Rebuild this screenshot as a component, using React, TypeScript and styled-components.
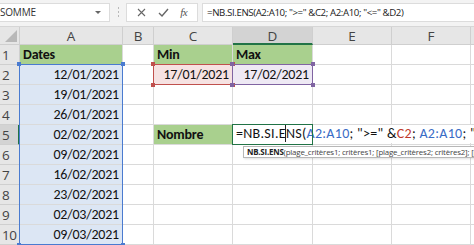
import React from 'react';
import styled, { createGlobalStyle } from 'styled-components';

const GlobalStyle = createGlobalStyle`
  html, body {
    margin: 0;
    padding: 0;
    background: #ffffff;
    overflow: hidden;
  }
  body {
    font-family: 'Open Sans', 'Liberation Sans', sans-serif;
  }
`;

const COLS = [20, 103, 31, 79, 80, 79, 79];
const ROW_H = 20;
const HEAD_H = 18;

const Sheet = styled.div`
  width: 474px;
  height: 245px;
  overflow: hidden;
  display: flex;
  flex-direction: column;
  background: #ffffff;
`;

const FormulaBar = styled.div`
  height: 27px;
  flex: 0 0 27px;
  display: flex;
  align-items: center;
  gap: 4px;
  background: #f3f3f3;
  border-bottom: 1px solid #d6d6d6;
  box-sizing: border-box;
  padding-bottom: 2px;
`;

const NameBox = styled.div`
  width: 110px;
  height: 19px;
  box-sizing: border-box;
  background: #ffffff;
  border: 1px solid #dcdcdc;
  border-left: none;
  display: flex;
  align-items: center;
  justify-content: space-between;
  padding: 0 8px 0 0;
  font-size: 10px;
  color: #333;
  letter-spacing: -0.2px;
`;

const DropArrow = styled.span`
  width: 0;
  height: 0;
  border-left: 3px solid transparent;
  border-right: 3px solid transparent;
  border-top: 3px solid #666;
`;

const Grip = styled.div`
  width: 8px;
  display: flex;
  flex-direction: column;
  align-items: center;
  gap: 2px;

  span {
    width: 1px;
    height: 2px;
    background: #b9b9b9;
  }
`;

const IconBox = styled.div`
  width: 72px;
  height: 19px;
  box-sizing: border-box;
  background: #ffffff;
  border: 1px solid #dcdcdc;
  display: flex;
  align-items: center;
  justify-content: space-around;
  padding: 0 4px;
`;

const FxGlyph = styled.span`
  font-family: 'Liberation Serif', serif;
  font-style: italic;
  font-size: 11px;
  color: #555;
  letter-spacing: -0.5px;
`;

const FormulaInput = styled.div`
  flex: 1;
  height: 19px;
  box-sizing: border-box;
  background: #ffffff;
  border: 1px solid #dcdcdc;
  border-right: none;
  display: flex;
  align-items: center;
  padding-left: 4px;
  font-size: 9.7px;
  color: #222;
  white-space: nowrap;
  overflow: hidden;
  letter-spacing: -0.4px;
`;

const Grid = styled.div`
  position: relative;
  display: grid;
  grid-template-columns: ${COLS.map((c) => `${c}px`).join(' ')} 1fr;
  grid-template-rows: ${HEAD_H}px repeat(10, ${ROW_H}px);
  font-family: 'Carlito', 'Open Sans', 'Liberation Sans', sans-serif;
`;

const Corner = styled.div`
  background: #e6e6e6;
  border-right: 1px solid #cfcfcf;
  border-bottom: 1px solid #cfcfcf;
  box-sizing: border-box;
  position: relative;

  &::after {
    content: '';
    position: absolute;
    right: 2px;
    bottom: 2px;
    width: 0;
    height: 0;
    border-left: 12px solid transparent;
    border-bottom: 12px solid #b8b8b8;
  }
`;

const ColHead = styled.div<{ $active?: boolean }>`
  background: ${(p) => (p.$active ? '#d3d3d3' : '#e6e6e6')};
  border-right: 1px solid #cfcfcf;
  border-bottom: ${(p) => (p.$active ? '2px solid #217346' : '1px solid #cfcfcf')};
  box-sizing: border-box;
  display: flex;
  align-items: center;
  justify-content: center;
  font-family: 'Open Sans', 'Liberation Sans', sans-serif;
  font-size: 13.5px;
  color: #444;
  padding-top: 1px;
`;

const RowHead = styled.div<{ $active?: boolean }>`
  background: ${(p) => (p.$active ? '#d3d3d3' : '#e6e6e6')};
  border-right: ${(p) => (p.$active ? '2px solid #217346' : '1px solid #cfcfcf')};
  border-bottom: 1px solid #cfcfcf;
  box-sizing: border-box;
  display: flex;
  align-items: center;
  padding-left: 2px;
  font-family: 'Open Sans', 'Liberation Sans', sans-serif;
  font-size: 13.5px;
  color: #444;
  letter-spacing: -0.5px;
`;

const Cell = styled.div<{ $fill?: string; $bold?: boolean; $right?: boolean }>`
  background: ${(p) => p.$fill || 'transparent'};
  border-right: 1px solid #dadada;
  border-bottom: 1px solid #dadada;
  box-sizing: border-box;
  display: flex;
  align-items: center;
  justify-content: ${(p) => (p.$right ? 'flex-end' : 'flex-start')};
  padding: 0 3px;
  font-size: 14px;
  font-weight: ${(p) => (p.$bold ? 700 : 400)};
  color: #111;
  white-space: nowrap;
  letter-spacing: -0.2px;
`;

const EditCell = styled(Cell)`
  position: relative;
  overflow: visible;
  z-index: 3;
  padding: 0;
  align-items: flex-start;
`;

const EditText = styled.span`
  display: block;
  background: #ffffff;
  padding: 0 0 0 3px;
  height: 18px;
  line-height: 18px;
  white-space: pre;
  letter-spacing: 0.3px;
`;

const Ref = styled.span<{ $color: string }>`
  color: ${(p) => p.$color};
`;

const Caret = styled.span`
  display: inline-block;
  width: 1px;
  height: 17px;
  vertical-align: -4px;
  background: #222;
  margin: 0 -0.5px;
`;

const RefBox = styled.div<{ $color: string }>`
  position: absolute;
  box-sizing: border-box;
  border: 1px solid ${(p) => p.$color};
  pointer-events: none;
  z-index: 4;
`;

const Handle = styled.span<{ $color: string }>`
  position: absolute;
  width: 4px;
  height: 4px;
  background: ${(p) => p.$color};
`;

const EditBox = styled.div`
  position: absolute;
  box-sizing: border-box;
  border: 1.5px solid #217346;
  z-index: 5;
  pointer-events: none;
`;

const Tooltip = styled.div`
  position: absolute;
  z-index: 6;
  height: 12px;
  box-sizing: border-box;
  background: #ffffff;
  border: 1px solid #b7b7b7;
  box-shadow: 1px 1px 2px rgba(0, 0, 0, 0.12);
  display: flex;
  align-items: center;
  padding: 0 3px;
  font-family: 'Open Sans', 'Liberation Sans', sans-serif;
  font-size: 7.9px;
  color: #444;
  white-space: nowrap;
  letter-spacing: -0.2px;

  b {
    color: #222;
    font-weight: 700;
  }
`;

const GREEN = '#a9d08e';
const BLUE_FILL = '#dce6f4';
const BLUE = '#4a7bd0';
const RED = '#c0504d';
const PURPLE = '#8064a2';

const colLeft = (i: number) => COLS.slice(0, i).reduce((a, b) => a + b, 0);
const rowTop = (r: number) => HEAD_H + (r - 1) * ROW_H;

type Box = { col: number; row: number; rows: number; color: string };

function RefFrame({ col, row, rows, color }: Box) {
  const s = { left: colLeft(col) - 1, top: rowTop(row) - 1, width: COLS[col] + 1, height: rows * ROW_H + 1 };
  return (
    <RefBox $color={color} style={s}>
      <Handle $color={color} style={{ left: -3, top: -3 }} />
      <Handle $color={color} style={{ right: -3, top: -3 }} />
      <Handle $color={color} style={{ left: -3, bottom: -3 }} />
      <Handle $color={color} style={{ right: -3, bottom: -3 }} />
    </RefBox>
  );
}

const dates = [
  '12/01/2021',
  '19/01/2021',
  '26/01/2021',
  '02/02/2021',
  '09/02/2021',
  '16/02/2021',
  '23/02/2021',
  '02/03/2021',
  '09/03/2021',
];

export default function App() {
  const letters = ['A', 'B', 'C', 'D', 'E', 'F', ''];

  const cellFor = (row: number, col: number) => {
    // col: 1=A ... 7=G
    if (row === 1) {
      if (col === 1) return <Cell key={col} $fill={GREEN} $bold>Dates</Cell>;
      if (col === 3) return <Cell key={col} $fill={GREEN} $bold>Min</Cell>;
      if (col === 4) return <Cell key={col} $fill={GREEN} $bold>Max</Cell>;
    }
    if (col === 1 && row >= 2) {
      return <Cell key={col} $fill={BLUE_FILL} $right>{dates[row - 2]}</Cell>;
    }
    if (row === 2 && col === 3) return <Cell key={col} $fill="#f6e2e2" $right>17/01/2021</Cell>;
    if (row === 2 && col === 4) return <Cell key={col} $fill="#eee9f4" $right>17/02/2021</Cell>;
    if (row === 5 && col === 3) return <Cell key={col} $fill={GREEN} $bold>Nombre</Cell>;
    if (row === 5 && col === 4) {
      return (
        <EditCell key={col}>
          <EditText>
            {'=NB.SI.E'}
            <Caret />
            {'NS('}
            <Ref $color="#3a6cc6">A2:A10</Ref>
            {'; ">=" &'}
            <Ref $color="#c0392b">C2</Ref>
            {'; '}
            <Ref $color="#3a6cc6">A2:A10</Ref>
            {'; "<=" &D2)'}
          </EditText>
        </EditCell>
      );
    }
    return <Cell key={col} />;
  };

  return (
    <>
      <GlobalStyle />
      <Sheet>
        <FormulaBar>
          <NameBox>
            <span>SOMME</span>
            <DropArrow />
          </NameBox>
          <Grip>
            <span />
            <span />
            <span />
          </Grip>
          <IconBox>
            <svg width="9" height="9" viewBox="0 0 9 9">
              <path d="M1 1 L8 8 M8 1 L1 8" stroke="#666" strokeWidth="1.1" fill="none" />
            </svg>
            <svg width="11" height="9" viewBox="0 0 11 9">
              <path d="M1 5 L4 8 L10 1" stroke="#666" strokeWidth="1.4" fill="none" />
            </svg>
            <FxGlyph>fx</FxGlyph>
          </IconBox>
          <FormulaInput>=NB.SI.ENS(A2:A10; "&gt;=" &amp;C2; A2:A10; "&lt;=" &amp;D2)</FormulaInput>
        </FormulaBar>

        <Grid>
          <Corner />
          {letters.map((l, i) => (
            <ColHead key={i} $active={l === 'D'}>{l}</ColHead>
          ))}
          {Array.from({ length: 10 }, (_, r) => {
            const row = r + 1;
            return (
              <React.Fragment key={row}>
                <RowHead $active={row === 5}>{row}</RowHead>
                {[1, 2, 3, 4, 5, 6, 7].map((c) => cellFor(row, c))}
              </React.Fragment>
            );
          })}

          <RefFrame col={1} row={2} rows={9} color={BLUE} />
          <RefFrame col={3} row={2} rows={1} color={RED} />
          <RefFrame col={4} row={2} rows={1} color={PURPLE} />
          <EditBox style={{ left: colLeft(4) - 1, top: rowTop(5) - 1, width: COLS[4] + 1, height: ROW_H + 1 }} />

          <Tooltip style={{ left: 243, top: rowTop(6) + 1 }}>
            <b>NB.SI.ENS</b>(plage_critères1; critères1; [plage_critères2; critères2]; [plage_critères3; ...
          </Tooltip>
        </Grid>
      </Sheet>
    </>
  );
}
